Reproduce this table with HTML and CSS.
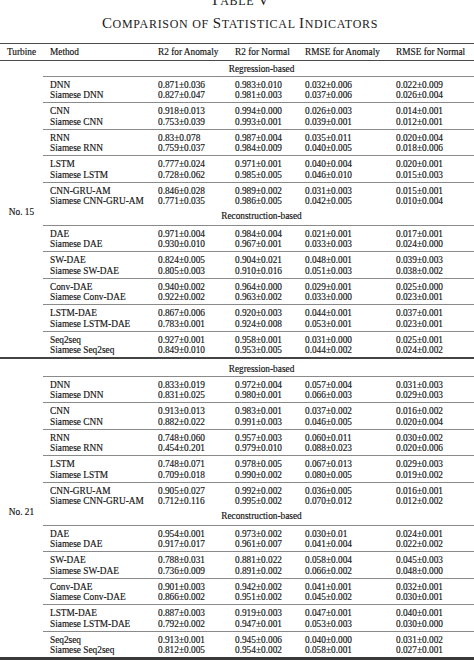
FILE: index.html
```html
<!DOCTYPE html>
<html lang="en">
<head>
<meta charset="utf-8">
<title>Table V</title>
<link rel="stylesheet" href="styles.css">
</head>
<body>
<div class="page">
  <div class="caption">
    <div class="cap-num"><span class="big">T</span><span class="sm">ABLE</span> <span class="big">V</span></div>
    <div class="cap-title"><span class="big">C</span><span class="sm">OMPARISON OF </span><span class="big">S</span><span class="sm">TATISTICAL </span><span class="big">I</span><span class="sm">NDICATORS</span></div>
  </div>
  <table class="results">
    <colgroup>
      <col class="c-turb"><col class="c-meth"><col class="c-r2a"><col class="c-r2n"><col class="c-rma"><col class="c-rmn">
    </colgroup>
    <thead>
      <tr><th class="turb">Turbine</th><th>Method</th><th>R2 for Anomaly</th><th>R2 for Normal</th><th>RMSE for Anomaly</th><th>RMSE for Normal</th></tr>
    </thead>
    <tbody class="sec first">
      <tr class="sub reg"><td class="turb" rowspan="22"><span class="turb-label">No. 15</span></td><td colspan="5">Regression-based</td></tr>
      <tr class="g1"><td>DNN</td><td>0.871±0.036</td><td>0.983±0.010</td><td>0.032±0.006</td><td>0.022±0.009</td></tr>
      <tr class="g2"><td>Siamese DNN</td><td>0.827±0.047</td><td>0.981±0.003</td><td>0.037±0.006</td><td>0.026±0.004</td></tr>
      <tr class="g1"><td>CNN</td><td>0.918±0.013</td><td>0.994±0.000</td><td>0.026±0.003</td><td>0.014±0.001</td></tr>
      <tr class="g2"><td>Siamese CNN</td><td>0.753±0.039</td><td>0.993±0.001</td><td>0.039±0.001</td><td>0.012±0.001</td></tr>
      <tr class="g1"><td>RNN</td><td>0.83±0.078</td><td>0.987±0.004</td><td>0.035±0.011</td><td>0.020±0.004</td></tr>
      <tr class="g2"><td>Siamese RNN</td><td>0.759±0.037</td><td>0.984±0.009</td><td>0.040±0.005</td><td>0.018±0.006</td></tr>
      <tr class="g1"><td>LSTM</td><td>0.777±0.024</td><td>0.971±0.001</td><td>0.040±0.004</td><td>0.020±0.001</td></tr>
      <tr class="g2"><td>Siamese LSTM</td><td>0.728±0.062</td><td>0.985±0.005</td><td>0.046±0.010</td><td>0.015±0.003</td></tr>
      <tr class="g1"><td>CNN-GRU-AM</td><td>0.846±0.028</td><td>0.989±0.002</td><td>0.031±0.003</td><td>0.015±0.001</td></tr>
      <tr class="g2"><td>Siamese CNN-GRU-AM</td><td>0.771±0.035</td><td>0.986±0.005</td><td>0.042±0.005</td><td>0.010±0.004</td></tr>
      <tr class="sub rec"><td colspan="5">Reconstruction-based</td></tr>
      <tr class="g1"><td>DAE</td><td>0.971±0.004</td><td>0.984±0.004</td><td>0.021±0.001</td><td>0.017±0.001</td></tr>
      <tr class="g2"><td>Siamese DAE</td><td>0.930±0.010</td><td>0.967±0.001</td><td>0.033±0.003</td><td>0.024±0.000</td></tr>
      <tr class="g1"><td>SW-DAE</td><td>0.824±0.005</td><td>0.904±0.021</td><td>0.048±0.001</td><td>0.039±0.003</td></tr>
      <tr class="g2"><td>Siamese SW-DAE</td><td>0.805±0.003</td><td>0.910±0.016</td><td>0.051±0.003</td><td>0.038±0.002</td></tr>
      <tr class="g1"><td>Conv-DAE</td><td>0.940±0.002</td><td>0.964±0.000</td><td>0.029±0.001</td><td>0.025±0.000</td></tr>
      <tr class="g2"><td>Siamese Conv-DAE</td><td>0.922±0.002</td><td>0.963±0.002</td><td>0.033±0.000</td><td>0.023±0.001</td></tr>
      <tr class="g1"><td>LSTM-DAE</td><td>0.867±0.006</td><td>0.920±0.003</td><td>0.044±0.001</td><td>0.037±0.001</td></tr>
      <tr class="g2"><td>Siamese LSTM-DAE</td><td>0.783±0.001</td><td>0.924±0.008</td><td>0.053±0.001</td><td>0.023±0.001</td></tr>
      <tr class="g1"><td>Seq2seq</td><td>0.927±0.001</td><td>0.958±0.001</td><td>0.031±0.000</td><td>0.025±0.001</td></tr>
      <tr class="g2"><td>Siamese Seq2seq</td><td>0.849±0.010</td><td>0.953±0.005</td><td>0.044±0.002</td><td>0.024±0.002</td></tr>
    </tbody>
    <tbody class="sec second">
      <tr class="sub reg"><td class="turb" rowspan="22"><span class="turb-label">No. 21</span></td><td colspan="5">Regression-based</td></tr>
      <tr class="g1"><td>DNN</td><td>0.833±0.019</td><td>0.972±0.004</td><td>0.057±0.004</td><td>0.031±0.003</td></tr>
      <tr class="g2"><td>Siamese DNN</td><td>0.831±0.025</td><td>0.980±0.001</td><td>0.066±0.003</td><td>0.029±0.003</td></tr>
      <tr class="g1"><td>CNN</td><td>0.913±0.013</td><td>0.983±0.001</td><td>0.037±0.002</td><td>0.016±0.002</td></tr>
      <tr class="g2"><td>Siamese CNN</td><td>0.882±0.022</td><td>0.991±0.003</td><td>0.046±0.005</td><td>0.020±0.004</td></tr>
      <tr class="g1"><td>RNN</td><td>0.748±0.060</td><td>0.957±0.003</td><td>0.060±0.011</td><td>0.030±0.002</td></tr>
      <tr class="g2"><td>Siamese RNN</td><td>0.454±0.201</td><td>0.979±0.010</td><td>0.088±0.023</td><td>0.020±0.006</td></tr>
      <tr class="g1"><td>LSTM</td><td>0.748±0.071</td><td>0.978±0.005</td><td>0.067±0.013</td><td>0.029±0.003</td></tr>
      <tr class="g2"><td>Siamese LSTM</td><td>0.709±0.018</td><td>0.990±0.002</td><td>0.080±0.005</td><td>0.019±0.002</td></tr>
      <tr class="g1"><td>CNN-GRU-AM</td><td>0.905±0.027</td><td>0.992±0.002</td><td>0.036±0.005</td><td>0.016±0.001</td></tr>
      <tr class="g2"><td>Siamese CNN-GRU-AM</td><td>0.712±0.116</td><td>0.995±0.002</td><td>0.070±0.012</td><td>0.012±0.002</td></tr>
      <tr class="sub rec"><td colspan="5">Reconstruction-based</td></tr>
      <tr class="g1"><td>DAE</td><td>0.954±0.001</td><td>0.973±0.002</td><td>0.030±0.01</td><td>0.024±0.001</td></tr>
      <tr class="g2"><td>Siamese DAE</td><td>0.917±0.017</td><td>0.961±0.007</td><td>0.041±0.004</td><td>0.022±0.002</td></tr>
      <tr class="g1"><td>SW-DAE</td><td>0.788±0.031</td><td>0.881±0.022</td><td>0.058±0.004</td><td>0.045±0.003</td></tr>
      <tr class="g2"><td>Siamese SW-DAE</td><td>0.736±0.009</td><td>0.891±0.002</td><td>0.066±0.002</td><td>0.048±0.000</td></tr>
      <tr class="g1"><td>Conv-DAE</td><td>0.901±0.003</td><td>0.942±0.002</td><td>0.041±0.001</td><td>0.032±0.001</td></tr>
      <tr class="g2"><td>Siamese Conv-DAE</td><td>0.866±0.002</td><td>0.951±0.002</td><td>0.045±0.002</td><td>0.030±0.001</td></tr>
      <tr class="g1"><td>LSTM-DAE</td><td>0.887±0.003</td><td>0.919±0.003</td><td>0.047±0.001</td><td>0.040±0.001</td></tr>
      <tr class="g2"><td>Siamese LSTM-DAE</td><td>0.792±0.002</td><td>0.947±0.001</td><td>0.053±0.003</td><td>0.030±0.000</td></tr>
      <tr class="g1"><td>Seq2seq</td><td>0.913±0.001</td><td>0.945±0.006</td><td>0.040±0.000</td><td>0.031±0.002</td></tr>
      <tr class="g2"><td>Siamese Seq2seq</td><td>0.812±0.005</td><td>0.954±0.002</td><td>0.058±0.001</td><td>0.027±0.001</td></tr>
    </tbody>
  </table>
</div>
</body>
</html>
```

FILE: styles.css
```css
html, body {
  margin: 0;
  padding: 0;
  background: #ffffff;
  overflow: hidden;
}

.page {
  width: 480px;
  font-family: "Liberation Serif", "Times New Roman", serif;
  color: #111111;
}

.caption {
  text-align: center;
  margin-top: -8px;
  font-size: 15px;
  line-height: 16px;
  color: #1a1a1a;
}

.caption .big {
  font-size: 15px;
  letter-spacing: 0.7px;
}

.caption .sm {
  font-size: 12px;
  line-height: 1;
  letter-spacing: 0.7px;
}

.cap-title {
  margin-top: 7px;
}

.results {
  margin-top: 12px;
  width: 480px;
  table-layout: fixed;
  border-collapse: collapse;
  font-size: 9.3px;
  line-height: 10.5px;
  border-top: 1.5px solid #4a4a4a;
  border-bottom: 3px solid #3a3a3a;
  -webkit-text-stroke: 0.15px #111111;
}

.c-turb { width: 43px; }
.c-meth { width: 108px; }
.c-r2a { width: 77px; }
.c-r2n { width: 70px; }
.c-rma { width: 91px; }
.c-rmn { width: 91px; }

.results th,
.results td {
  padding: 0 0 0 7px;
  text-align: left;
  vertical-align: middle;
  white-space: nowrap;
  font-weight: normal;
}

.results thead th {
  padding-top: 3px;
  padding-bottom: 2.5px;
  border-bottom: 1.5px solid #4a4a4a;
}

.results th.turb,
.results td.turb {
  padding-left: 0;
  text-align: center;
}

.turb-label {
  display: inline-block;
  padding-top: 6px;
}

.results tr.sub td {
  text-align: center;
  padding-left: 0;
}

.results tr.sub.reg td {
  padding-top: 2.5px;
  padding-bottom: 1.5px;
}

.results tbody.second tr.sub.reg td {
  padding-top: 4.5px;
}

.results tr.sub.rec td {
  padding-top: 3px;
  padding-bottom: 3px;
}

.results tr.g1 td {
  border-top: 1px solid #8a8a8a;
  padding-top: 3px;
}

.results tr.g2 td {
  padding-bottom: 1.5px;
}

.results tbody.second tr.sub.reg td {
  border-top: 2px solid #444444;
}
```
